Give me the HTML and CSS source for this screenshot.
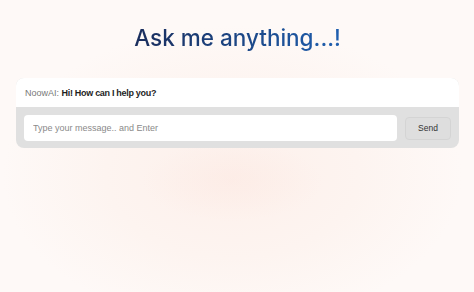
FILE: index.html
```html
<!DOCTYPE html>
<html>
<head>
<meta charset="utf-8">
<link rel="stylesheet" href="styles.css">
</head>
<body>
<main class="page">
  <h1 class="title">Ask me anything...!</h1>
  <section class="chat">
    <div class="messages">
      <p class="msg"><span class="who">NoowAI:</span> <strong class="text">Hi! How can I help you?</strong></p>
    </div>
    <form class="composer">
      <input class="input" type="text" placeholder="Type your message.. and Enter">
      <button class="send" type="button">Send</button>
    </form>
  </section>
</main>
</body>
</html>
```
FILE: styles.css
```css
html, body {
  margin: 0;
  height: 100%;
}
body {
  background-color: #fef9f7;
  background-image:
    radial-gradient(ellipse 90px 40px at 49% 62%, rgba(252, 232, 225, 0.45) 0%, rgba(252, 232, 225, 0) 100%),
    radial-gradient(ellipse 230px 150px at 49% 60%, #fdf0eb 0%, #fdf4f0 55%, #fef9f7 100%);
  font-family: "Liberation Sans", Arial, sans-serif;
}
.page {
  padding: 21px 15px 0 16px;
}
.title {
  margin: 0 auto 23px;
  text-align: center;
  font-family: "Inter", "Open Sans", sans-serif;
  font-weight: 500;
  font-size: 22.5px;
  line-height: 34px;
  background: linear-gradient(90deg, #1a2d5c 0%, #1c4888 55%, #1f5fb0 100%);
  -webkit-background-clip: text;
  background-clip: text;
  color: transparent;
  width: max-content;
}
.chat {
  border-radius: 8px;
  overflow: hidden;
  background: #e0e0e0;
}
.messages {
  background: #ffffff;
  height: 29px;
  display: flex;
  align-items: center;
  padding: 0 9px;
}
.msg {
  margin: 0;
  font-size: 9px;
  color: #222;
}
.who {
  color: #787878;
}
.text {
  font-weight: bold;
  letter-spacing: -0.3px;
  color: #1e1e1e;
}
.composer {
  margin: 0;
  display: flex;
  align-items: center;
  gap: 8px;
  padding: 8px 8px 7px;
}
.input {
  flex: 1;
  height: 26px;
  box-sizing: border-box;
  border: none;
  border-radius: 4px;
  background: #fff;
  padding: 0 9px;
  font-family: "Liberation Sans", Arial, sans-serif;
  font-size: 9px;
  outline: none;
}
.input::placeholder {
  color: #8a8a8a;
}
.send {
  width: 46px;
  height: 23px;
  box-sizing: border-box;
  border: 1px solid #d4d4d4;
  border-radius: 4px;
  background: #dedede;
  color: #333;
  font-family: "Liberation Sans", Arial, sans-serif;
  font-size: 8.5px;
  padding: 0;
}
```
